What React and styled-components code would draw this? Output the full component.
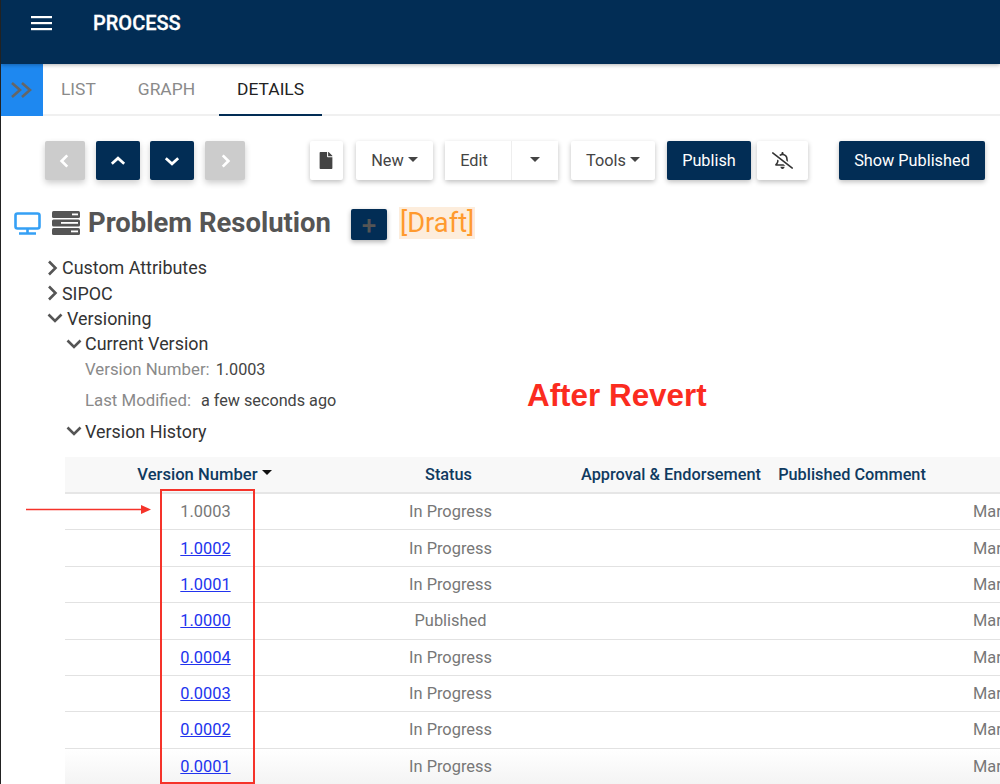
import React from "react";
import styled, { createGlobalStyle } from "styled-components";
import { FaRegBellSlash } from "react-icons/fa";

const Global = createGlobalStyle`
  html, body { margin: 0; padding: 0; background: #fff; }
  body { font-family: Roboto, "Liberation Sans", sans-serif; }
  * { box-sizing: border-box; }
`;
const navy = "#022d55";

const Page = styled.div`
  position: relative;
  width: 1000px;
  height: 784px;
  overflow: hidden;
  border-left: 1px solid #222;
  background: #fff;
`;
const Header = styled.header`
  height: 64px;
  background: ${navy};
  display: flex;
  align-items: flex-start;
  padding: 13px 0 0 28px;
  gap: 40px;
  color: #fff;
  box-shadow: 0 1px 4px rgba(0,0,0,.3);
  position: relative;
`;
const Title = styled.div`
  font-size: 20px;
  font-weight: 500;
  line-height: 20px;
  -webkit-text-stroke: 0.3px #fff;
`;
const TabBar = styled.nav`
  height: 52px;
  display: flex;
  border-bottom: 2px solid #f0f0f0;
`;
const Toggle = styled.div`
  width: 42px;
  height: 52px;
  background: #1e88f0;
  display: flex;
  align-items: center;
  justify-content: center;
`;
const Tab = styled.div`
  height: 52px;
  padding: 0 ${p => p.$pad}px;
  display: flex;
  align-items: center;
  font-size: 17.4px;
  color: ${p => (p.$active ? "#222" : "#8a8a8a")};
  border-bottom: 2px solid ${p => (p.$active ? navy : "transparent")};
`;
const Toolbar = styled.div`
  display: flex;
  align-items: flex-start;
  padding: 25px 0 0 44px;
  height: 85px;
`;
const Group = styled.div`
  display: flex;
  gap: ${p => p.$gap}px;
`;
const NavBtn = styled.div`
  width: ${p => p.$w}px;
  height: 39px;
  border-radius: 2px;
  background: ${p => (p.$off ? "#cccccc" : navy)};
  color: #fff;
  display: flex;
  align-items: center;
  justify-content: center;
  box-shadow: 0 3px 6px rgba(0,0,0,.2);
`;
const Btn = styled.div`
  height: 39px;
  width: ${p => p.$w}px;
  border-radius: 2px;
  background: ${p => (p.$dark ? navy : "#fff")};
  color: ${p => (p.$dark ? "#fff" : "#444")};
  font-size: 16.3px;
  display: flex;
  align-items: center;
  justify-content: center;
  gap: 4px;
  box-shadow: 0 2px 5px rgba(0,0,0,.25);
  margin-left: ${p => p.$ml || 0}px;
`;
const Split = styled.div`
  height: 39px;
  width: ${p => p.$w}px;
  padding-right: ${p => p.$pr || 0}px;
  display: flex;
  align-items: center;
  justify-content: center;
  color: #444;
  font-size: 16.3px;
  background: #fff;
  border-left: ${p => (p.$sep ? "1px solid #eee" : "none")};
`;
const SplitWrap = styled.div`
  display: flex;
  margin-left: 12px;
  border-radius: 2px;
  box-shadow: 0 2px 5px rgba(0,0,0,.25);
`;
const Caret = styled.span`
  display: inline-block;
  width: 0;
  height: 0;
  border-left: 5px solid transparent;
  border-right: 5px solid transparent;
  border-top: 5px solid ${p => p.$c || "#444"};
  margin-top: -2px;
  vertical-align: ${p => p.$va || 0}px;
`;
const Heading = styled.div`
  display: flex;
  align-items: center;
  height: 44px;
  padding-left: 13px;
`;
const H1 = styled.h1`
  margin: 0 20px 0 8px;
  font-size: 27.45px;
  font-weight: 700;
  color: #555;
  line-height: 32px;
`;
const AddBtn = styled.div`
  width: 36px;
  height: 31px;
  margin-top: 3px;
  background: ${navy};
  border-radius: 2px;
  color: #555;
  font-size: 26px;
  font-weight: 500;
  display: flex;
  align-items: center;
  justify-content: center;
  box-shadow: 0 2px 5px rgba(0,0,0,.3);
`;
const Draft = styled.span`
  margin-left: 12px;
  background: #fdeddc;
  color: #ff9a2e;
  font-size: 27.3px;
  line-height: 32px;
  padding: 0 1px;
`;
const Tree = styled.div`
  padding: 10px 0 0 46px;
`;
const Node = styled.div`
  display: flex;
  align-items: center;
  height: 25.4px;
  padding-left: ${p => p.$indent || 0}px;
  gap: ${p => p.$gap}px;
  font-size: 17.9px;
  color: #333;
  svg { color: #555; margin-right: -1px; }
`;
const Meta = styled.div`
  height: ${p => p.$h}px;
  padding-left: 38px;
  font-size: 16.8px;
  color: #8a8a8a;
  display: flex;
  align-items: center;
`;
const MetaValue = styled.span`
  color: #444;
  font-size: 16.2px;
  margin-left: ${p => p.$ml}px;
`;
const Table = styled.div`
  margin: 13px 0 0 64px;
  width: 936px;
`;
const Columns = "265px 241px 198px 166px 1fr";
const HeadRow = styled.div`
  display: grid;
  grid-template-columns: ${Columns};
  height: 37px;
  background: #f8f8f8;
  border-bottom: 2px solid #e6e6e6;
  align-items: center;
`;
const HeadCell = styled.div`
  text-align: center;
  font-size: ${p => p.$size || 16.3}px;
  font-weight: 500;
  color: #0f3a60;
  padding-left: ${p => p.$pl || 0}px;
  padding-right: ${p => p.$pr || 0}px;
  white-space: nowrap;
`;
const Row = styled.div`
  display: grid;
  grid-template-columns: ${Columns};
  height: 36.4px;
  border-bottom: 1px solid #e2e2e2;
  align-items: center;
  font-size: 16.4px;
  color: #777;
  background: ${p => (p.$last ? "linear-gradient(#fff, #f4f4f4)" : "transparent")};
`;
const Cell = styled.div`
  text-align: center;
  padding-left: ${p => p.$pl || 0}px;
  white-space: nowrap;
  overflow: hidden;
`;
const DateCell = styled.div`
  padding-left: 38px;
  white-space: nowrap;
`;
const VersionLink = styled.a`
  color: #2233ee;
  text-decoration: underline;
`;
const RedBox = styled.div`
  position: absolute;
  left: 159px;
  top: 489px;
  width: 95px;
  height: 295px;
  border: 2px solid #f5332a;
`;
const Note = styled.div`
  position: absolute;
  left: 526px;
  top: 379px;
  font-family: "Liberation Sans", Arial, sans-serif;
  font-weight: 700;
  font-size: 31.4px;
  line-height: 34px;
  color: #fb2c1f;
`;
const ArrowMark = styled.svg`
  position: absolute;
  left: 24px;
  top: 503px;
`;

const Chev = ({ d, size = 18, w = 2.4 }) => {
  const paths = {
    left: "M10 3 5 8l5 5",
    right: "M6 3l5 5-5 5",
    up: "M2.500 10.500 8 5.500l5.500 5",
    down: "M2.500 5.500 8 10.500l5.500-5",
    treeRight: "M2 1.500 8.500 8 2 14.500",
    treeDown: "M1.500 4.500 8 11l6.500-6.500",
  };
  return (
    <svg width={size} height={size} viewBox="0 0 16 16" fill="none" stroke="currentColor" strokeWidth={w}>
      <path d={paths[d]} />
    </svg>
  );
};

const rows = [
  ["1.0003", "In Progress", false],
  ["1.0002", "In Progress", true],
  ["1.0001", "In Progress", true],
  ["1.0000", "Published", true],
  ["0.0004", "In Progress", true],
  ["0.0003", "In Progress", true],
  ["0.0002", "In Progress", true],
  ["0.0001", "In Progress", true],
];

export default function App() {
  return (
    <Page>
      <Global />
      <Header>
        <svg width="24" height="20" viewBox="0 0 24 20" fill="#fff">
          <rect x="2" y="3" width="21" height="2.2" />
          <rect x="2" y="9" width="21" height="2.2" />
          <rect x="2" y="15" width="21" height="2.2" />
        </svg>
        <Title>PROCESS</Title>
      </Header>
      <TabBar>
        <Toggle>
          <svg width="24" height="18" viewBox="0 0 24 18" fill="none" stroke="#666" strokeWidth="2.6">
            <path d="M2 2l8 7-8 7M12 2l8 7-8 7" />
          </svg>
        </Toggle>
        <Tab $pad={18}>LIST</Tab>
        <Tab $pad={24}>GRAPH</Tab>
        <Tab $pad={18} $active>DETAILS</Tab>
      </TabBar>
      <Toolbar>
        <Group $gap={10.67}>
          <NavBtn $w={40} $off><Chev d="left" /></NavBtn>
          <NavBtn $w={44}><Chev d="up" /></NavBtn>
          <NavBtn $w={44}><Chev d="down" /></NavBtn>
          <NavBtn $w={40} $off><Chev d="right" /></NavBtn>
        </Group>
        <Btn $w={33} $ml={65}>
          <svg width="14" height="17" viewBox="0 0 384 512" fill="#444">
            <path d="M224 136V0H24C10.7 0 0 10.7 0 24v464c0 13.3 10.7 24 24 24h336c13.300 0 24-10.700 24-24V160H248c-13.200 0-24-10.800-24-24zm160-14.100v6.100H256V0h6.100c6.400 0 12.500 2.500 17 7l97.900 98c4.500 4.500 7 10.600 7 16.900z" />
          </svg>
        </Btn>
        <Btn $w={77} $ml={13}>New <Caret /></Btn>
        <SplitWrap>
          <Split $w={66} $pr={8}>Edit</Split>
          <Split $w={47} $sep><Caret /></Split>
        </SplitWrap>
        <Btn $w={84} $ml={13}>Tools <Caret /></Btn>
        <Btn $w={84} $ml={12} $dark>Publish</Btn>
        <Btn $w={51} $ml={6}>
          <FaRegBellSlash size={21} color="#333" />
        </Btn>
        <Btn $w={146} $ml={31} $dark>Show Published</Btn>
      </Toolbar>
      <Heading>
        <svg width="28" height="24" viewBox="0 0 28 24" fill="none" stroke="#35a0f5" strokeWidth="2.6">
          <rect x="1.500" y="2.500" width="24" height="15" rx="2" />
          <path d="M13.500 17.500v4M5 22.500h17" />
        </svg>
        <svg width="28" height="24" viewBox="0 0 28 24" style={{ marginLeft: 10 }}>
          <g fill="#555">
            <rect x="0" y="0" width="28" height="7" rx="1.500" />
            <rect x="0" y="8.500" width="28" height="7" rx="1.500" />
            <rect x="0" y="17" width="28" height="7" rx="1.500" />
          </g>
          <g fill="#fff">
            <rect x="20" y="2.500" width="6" height="1.800" />
            <rect x="9" y="11" width="17" height="1.800" />
            <rect x="19" y="19.500" width="7" height="1.800" />
          </g>
        </svg>
        <H1>Problem Resolution</H1>
        <AddBtn>+</AddBtn>
        <Draft>[Draft]</Draft>
      </Heading>
      <Tree>
        <Node $gap={0}><Chev d="treeRight" size={16} w={2.6} /> Custom Attributes</Node>
        <Node $gap={0}><Chev d="treeRight" size={16} w={2.6} /> SIPOC</Node>
        <Node $gap={5}><Chev d="treeDown" size={16} w={2.6} /> Versioning</Node>
        <Node $indent={19} $gap={4}><Chev d="treeDown" size={16} w={2.6} /> Current Version</Node>
        <Meta $h={25}>Version Number:<MetaValue $ml={6}>1.0003</MetaValue></Meta>
        <Meta $h={37}>Last Modified:<MetaValue $ml={10}>a few seconds ago</MetaValue></Meta>
        <Node $indent={19} $gap={4}><Chev d="treeDown" size={16} w={2.6} /> Version History</Node>
      </Tree>
      <Table>
        <HeadRow>
          <HeadCell $pl={14} $size={16.6}>Version Number <Caret $c="#111" $va={5} /></HeadCell>
          <HeadCell $pr={4}>Status</HeadCell>
          <HeadCell $pl={2}>Approval &amp; Endorsement</HeadCell>
          <HeadCell>Published Comment</HeadCell>
          <span />
        </HeadRow>
        {rows.map(([v, s, link], i) => (
          <Row key={v} $last={i === rows.length - 1}>
            <Cell $pl={16}>{link ? <VersionLink>{v}</VersionLink> : v}</Cell>
            <Cell>{s}</Cell>
            <span />
            <span />
            <DateCell>Mar</DateCell>
          </Row>
        ))}
      </Table>
      <Note>After Revert</Note>
      <ArrowMark width="130" height="14" viewBox="0 0 130 14">
        <path d="M1 6.500h116" stroke="#f5332a" strokeWidth="1.400" />
        <path d="M116 2l10 4.500-10 4.500z" fill="#f5332a" />
      </ArrowMark>
      <RedBox />
    </Page>
  );
}
